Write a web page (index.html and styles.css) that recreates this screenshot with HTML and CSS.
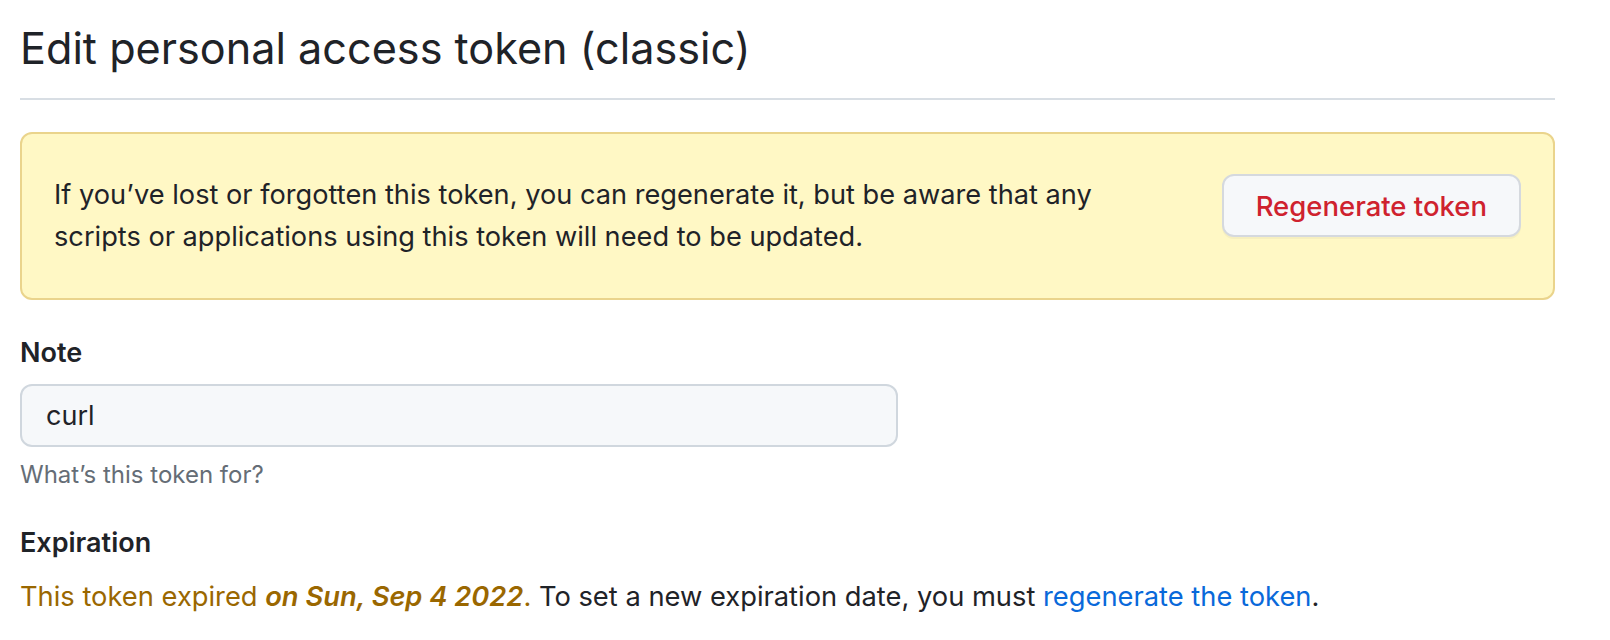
FILE: index.html
```html
<!DOCTYPE html>
<html lang="en">
<head>
<meta charset="utf-8">
<title>Edit personal access token (classic)</title>
<link rel="stylesheet" href="styles.css">
</head>
<body>
<main class="page">
  <div class="subhead">
    <h2 class="subhead-heading">Edit personal access token (classic)</h2>
  </div>

  <div class="flash">
    <p class="flash-text">If you’ve lost or forgotten this token, you can regenerate it, but be aware that any scripts or applications using this token will need to be updated.</p>
    <button class="btn-danger" type="button">Regenerate token</button>
  </div>

  <div class="form-group">
    <label class="form-label" for="note">Note</label>
    <input class="form-control" id="note" type="text" value="curl">
    <p class="note">What’s this token for?</p>
  </div>

  <div class="form-group expiration">
    <div class="form-label">Expiration</div>
    <p class="expired"><span class="attention">This token expired <em>on Sun, Sep 4 2022</em>.</span> To set a new expiration date, you must <a href="#" class="link">regenerate the token</a>.</p>
  </div>
</main>
</body>
</html>
```

FILE: styles.css
```css
* { box-sizing: border-box; }
body {
  margin: 0;
  background: #ffffff;
  color: #1f2328;
  font-family: Inter, "Liberation Sans", sans-serif;
}
.page {
  width: 1535px;
  margin-left: 20px;
  padding-top: 20px;
}
.subhead {
  padding-bottom: 22px;
  border-bottom: 2px solid #d8dee4;
}
.subhead-heading {
  margin: 0;
  font-size: 43.2px;
  line-height: 56px;
  font-weight: 400;
}
.flash {
  margin-top: 32px;
  display: flex;
  justify-content: space-between;
  align-items: flex-start;
  padding: 40px 32px;
  background: #fff8c5;
  border: 2px solid #ead48c;
  border-radius: 12px;
}
.flash-text {
  margin: 0;
  max-width: 1100px;
  font-size: 27.2px;
  line-height: 42px;
}
.btn-danger {
  flex: none;
  height: 63px;
  padding: 0 32px;
  font-family: inherit;
  font-size: 27.5px;
  font-weight: 500;
  color: #cf222e;
  background: #f6f8fa;
  border: 2px solid #d5d9de;
  border-radius: 12px;
  box-shadow: 0 2px 0 rgba(31, 35, 40, 0.04);
}
.form-group { margin-top: 32px; }
.form-label {
  display: block;
  font-size: 27px;
  line-height: 42px;
  font-weight: 600;
}
.form-control {
  display: block;
  margin-top: 10px;
  width: 878px;
  height: 63px;
  padding: 0 24px;
  font-family: inherit;
  font-size: 27px;
  color: #1f2328;
  background: #f6f8fa;
  border: 2px solid #d0d7de;
  border-radius: 12px;
}
.note {
  margin: 12px 0 0;
  font-size: 24px;
  line-height: 32px;
  color: #656d76;
}
.expiration { margin-top: 31px; }
.expired {
  margin: 12px 0 0;
  font-size: 27.3px;
  line-height: 42px;
}
.attention { color: #9a6700; }
.attention em { font-weight: 600; }
.link { color: #0969da; text-decoration: none; }
```
